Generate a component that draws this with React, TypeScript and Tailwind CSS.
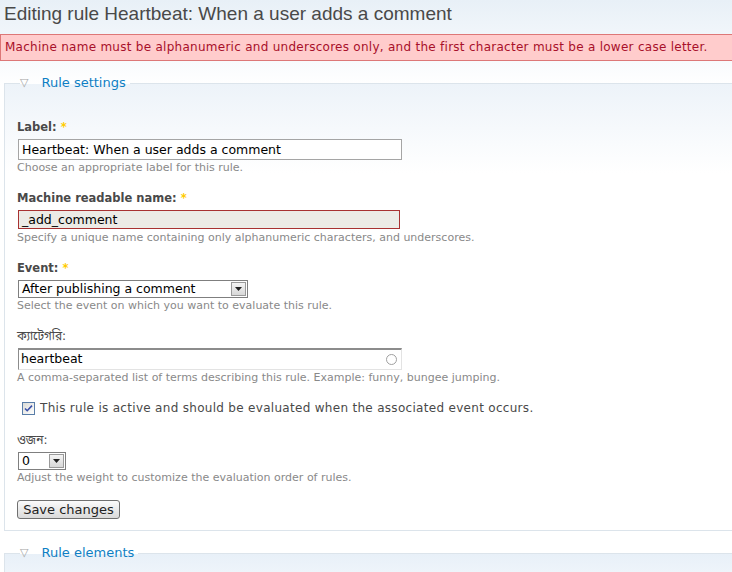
const body = "font-['DejaVu_Sans','Noto_Sans','Noto_Sans_Bengali',sans-serif]";

function Req() {
  return <span className="text-[#ffcc00]"> *</span>;
}

function Desc({ children }: { children: React.ReactNode }) {
  return <div className="text-[11px] leading-[14px] text-[#898989]">{children}</div>;
}

function FieldLabel({ children }: { children: React.ReactNode }) {
  return <div className="text-[11.5px] font-bold leading-[16px] text-[#494949]">{children}</div>;
}

function SelectBox({ value, width }: { value: string; width: string }) {
  return (
    <div className={`flex h-[18px] ${width} items-stretch border border-[#7f7f7f] bg-white`}>
      <div className="flex-1 truncate pl-[3px] text-[12.5px] leading-[16px] text-black">{value}</div>
      <div className="m-px flex w-[15px] items-center justify-center border border-[#9a9a9a] bg-gradient-to-b from-[#f4f4f4] to-[#d8d8d8]">
        <svg width="7" height="4" viewBox="0 0 7 4">
          <path d="M0 0h7L3.5 4z" fill="#222" />
        </svg>
      </div>
    </div>
  );
}

function Legend({ title }: { title: string }) {
  return (
    <legend className="ml-[3px] flex items-center pr-1 text-[13px] leading-[16px]">
      <span className="mr-[13px] text-[11px] text-[#a6a6a6]">▽</span>
      <span className="text-[#0f7fc4]">{title}</span>
    </legend>
  );
}

export default function App() {
  return (
    <div className={`h-[572px] w-[732px] overflow-hidden bg-gradient-to-b from-[#e8f0f7] via-white via-[15%] to-white ${body} text-[12px] text-[#494949]`}>
      <h2 className="pl-1 font-['Liberation_Sans',Arial,sans-serif] text-[19px] leading-[28px] text-[#494949]">
        Editing rule Heartbeat: When a user adds a comment
      </h2>

      <div className="mt-[6px] h-[27px] w-[740px] border border-[#dd7777] bg-[#ffcccc] pl-[4px] text-[12px] leading-[25px] tracking-[0.27px] text-[#a8102a]">
        Machine name must be alphanumeric and underscores only, and the first character must be a lower case letter.
      </div>

      <fieldset className="mt-[14px] ml-1 w-[740px] border border-[#dce4eb] bg-gradient-to-b from-[#edf3f9] via-white via-[20%] to-white pl-[12px] pb-[11px]">
        <Legend title="Rule settings" />

        <div className="pt-[28px]">
          {/* Label */}
          <FieldLabel>
            Label:<Req />
          </FieldLabel>
          <div className="ml-px mt-[4px] h-[21px] w-[384px] border border-[#a5a5a5] bg-white pl-[3px] text-[12.5px] leading-[19px] text-black">
            Heartbeat: When a user adds a comment
          </div>
          <div className="mt-px">
            <Desc>Choose an appropriate label for this rule.</Desc>
          </div>

          {/* Machine name */}
          <div className="mt-[15px]">
            <FieldLabel>
              Machine readable name:<Req />
            </FieldLabel>
          </div>
          <div className="ml-px mt-[4px] h-[19px] w-[382px] border border-[#a83232] bg-[#ecebe6] pl-[3px] text-[12.5px] leading-[17px] text-black">
            _add_comment
          </div>
          <div className="mt-[2px]">
            <Desc>Specify a unique name containing only alphanumeric characters, and underscores.</Desc>
          </div>

          {/* Event */}
          <div className="mt-[15px]">
            <FieldLabel>
              Event:<Req />
            </FieldLabel>
          </div>
          <div className="ml-px mt-[4px]">
            <SelectBox value="After publishing a comment" width="w-[230px]" />
          </div>
          <div className="mt-px">
            <Desc>Select the event on which you want to evaluate this rule.</Desc>
          </div>

          {/* Category */}
          <div className="mt-[15px] text-[12px] leading-[16px] text-[#494949]">ক্যাটেগরি:</div>
          <div className="ml-px mt-[4px] flex h-[22px] w-[384px] items-center justify-between border border-t-2 border-[#e3e3e3] border-t-[#8c8c8c] border-l-[#8c8c8c] bg-white pl-[2px] pr-[4px] text-[12.5px] text-black">
            <span>heartbeat</span>
            <span className="h-[11px] w-[11px] rounded-full border-[1.5px] border-[#a0a0a0]" />
          </div>
          <div className="mt-px">
            <Desc>A comma-separated list of terms describing this rule. Example: funny, bungee jumping.</Desc>
          </div>

          {/* Active */}
          <div className="mt-[15px] flex h-[16px] items-center pl-[5px] text-[12px] tracking-[0.3px] text-[#494949]">
            <span className="mr-[5px] flex h-[13px] w-[13px] items-center justify-center border border-[#5a7ea8] bg-gradient-to-br from-[#dcdcd7] to-white">
              <svg width="9" height="9" viewBox="0 0 9 9">
                <path d="M1 4.5l2.2 2.2L8 1.6" fill="none" stroke="#3a4fa8" strokeWidth="1.6" />
              </svg>
            </span>
            This rule is active and should be evaluated when the associated event occurs.
          </div>

          {/* Weight */}
          <div className="mt-[16px] text-[12px] leading-[16px] text-[#494949]">ওজন:</div>
          <div className="ml-px mt-[4px]">
            <SelectBox value="0" width="w-[48px]" />
          </div>
          <div className="mt-px">
            <Desc>Adjust the weight to customize the evaluation order of rules.</Desc>
          </div>

          <button className="mt-[15px] h-[19px] w-[103px] rounded-[3px] border border-[#707070] bg-gradient-to-b from-[#fbfbfb] to-[#dadada] text-[13px] leading-[16px] text-[#222]">
            Save changes
          </button>
        </div>
      </fieldset>

      <fieldset className="mt-[14px] ml-1 h-[80px] w-[740px] border border-[#dce4eb] bg-gradient-to-b from-[#e8f0f8] to-white pl-[12px]">
        <Legend title="Rule elements" />
      </fieldset>
    </div>
  );
}
